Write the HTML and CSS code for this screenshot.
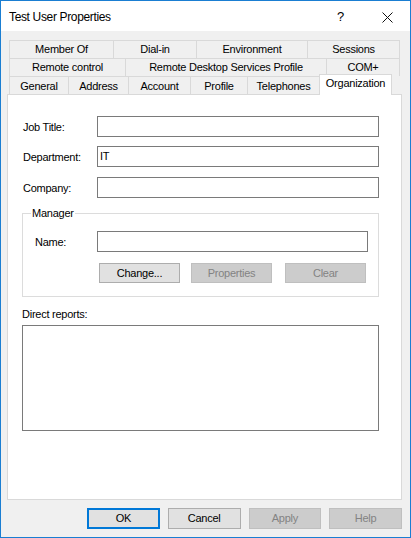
FILE: index.html
```html
<!DOCTYPE html>
<html>
<head>
<meta charset="utf-8">
<title>Test User Properties</title>
<link rel="stylesheet" href="styles.css">
</head>
<body>
<div class="window">
  <div class="titlebar">
    <span class="title">Test User Properties</span>
    <span class="tb-btn help">?</span>
    <span class="tb-btn close"><svg width="11" height="11" viewBox="0 0 11 11"><path d="M0.5 0.5L10.5 10.5M10.5 0.5L0.5 10.5" stroke="#111" stroke-width="1" fill="none"/></svg></span>
  </div>
  <div class="content">
    <div class="tabs">
      <div class="tab-row">
        <div class="tab t-member">Member Of</div>
        <div class="tab t-dialin">Dial-in</div>
        <div class="tab t-env">Environment</div>
        <div class="tab t-sessions last">Sessions</div>
      </div>
      <div class="tab-row">
        <div class="tab t-remote">Remote control</div>
        <div class="tab t-rdsp">Remote Desktop Services Profile</div>
        <div class="tab t-com last">COM+</div>
      </div>
      <div class="tab-row front">
        <div class="tab t-general">General</div>
        <div class="tab t-address">Address</div>
        <div class="tab t-account">Account</div>
        <div class="tab t-profile">Profile</div>
        <div class="tab t-tel">Telephones</div>
        <div class="tab selected t-org">Organization</div>
      </div>
    </div>
    <div class="panel">
      <div class="field">
        <label class="lbl">Job Title:</label>
        <div class="input wide"></div>
      </div>
      <div class="field f-dept">
        <label class="lbl">Department:</label>
        <div class="input wide">IT</div>
      </div>
      <div class="field f-company">
        <label class="lbl">Company:</label>
        <div class="input wide"></div>
      </div>
      <div class="group">
        <span class="legend">Manager</span>
        <div class="field">
          <label class="lbl name-lbl">Name:</label>
          <div class="input name-input"></div>
        </div>
        <div class="group-buttons">
          <button class="btn small">Change...</button>
          <button class="btn small disabled b-props">Properties</button>
          <button class="btn small disabled b-clear">Clear</button>
        </div>
      </div>
      <div class="reports-lbl">Direct reports:</div>
      <div class="listbox"></div>
    </div>
    <div class="footer">
      <button class="btn big default">OK</button>
      <button class="btn big">Cancel</button>
      <button class="btn big disabled">Apply</button>
      <button class="btn big disabled">Help</button>
    </div>
  </div>
</div>
</body>
</html>
```

FILE: styles.css
```css
html, body {
  margin: 0;
  padding: 0;
}
body {
  width: 411px;
  height: 538px;
  overflow: hidden;
  font-family: "Liberation Sans", Arial, sans-serif;
  font-size: 11px;
  letter-spacing: -0.25px;
  color: #000;
}
.window {
  box-sizing: border-box;
  width: 411px;
  height: 538px;
  border: 1px solid #1a7ed2;
  background: #f0f0f0;
  display: flex;
  flex-direction: column;
}
.titlebar {
  height: 30px;
  background: #fff;
  display: flex;
  align-items: center;
  flex: none;
}
.title {
  flex: 1;
  padding-left: 8px;
  font-size: 12px;
  letter-spacing: -0.35px;
  line-height: 30px;
  padding-top: 1px;
  color: #000;
}
.tb-btn {
  width: 46px;
  height: 30px;
  display: flex;
  align-items: center;
  justify-content: center;
  box-sizing: border-box;
}
.help {
  font-size: 13px;
  padding-top: 1px;
  padding-right: 1px;
}
.close {
  padding-top: 3px;
}
.content {
  flex: 1;
  padding: 9px 8px 0 6px;
  display: flex;
  flex-direction: column;
}
.tabs {
  margin: 0 2px;
  display: flex;
  flex-direction: column;
}
.tab-row {
  display: flex;
  height: 18px;
  align-items: flex-end;
}
.tab {
  box-sizing: border-box;
  height: 18px;
  border-top: 1px solid #d9d9d9;
  border-left: 1px solid #d9d9d9;
  text-align: center;
  line-height: 17px;
  white-space: nowrap;
  background: #f0f0f0;
}
.tab.last {
  border-right: 1px solid #d9d9d9;
}
.front .tab {
  padding-top: 1px;
}
.t-member { width: 104px; }
.t-dialin { width: 83px; }
.t-env { width: 111px; }
.t-sessions { width: 93px; }
.t-remote { width: 116px; }
.t-rdsp { width: 201px; }
.t-com { width: 74px; }
.t-general { width: 59px; }
.t-address { width: 60px; }
.t-account { width: 62px; }
.t-profile { width: 57px; }
.t-tel { width: 72px; }
.front .tab.selected {
  width: 73px;
  height: 21px;
  margin-bottom: -1px;
  padding-top: 0;
  border-right: 1px solid #d9d9d9;
  background: #fff;
  position: relative;
  z-index: 2;
}
.panel {
  box-sizing: border-box;
  width: 395px;
  height: 406px;
  border: 1px solid #d9d9d9;
  background: #fff;
  padding: 21px 0 0 14px;
  flex: none;
}
.field {
  display: flex;
  align-items: center;
  height: 21px;
}
.f-dept { margin-top: 9px; }
.f-company { margin-top: 10px; }
.lbl {
  width: 75px;
  flex: none;
  padding-left: 1px;
  box-sizing: border-box;
}
.input {
  box-sizing: border-box;
  height: 21px;
  border: 1px solid #7a7a7a;
  background: #fff;
  padding-left: 2px;
  line-height: 19px;
}
.wide { width: 282px; }
.group {
  position: relative;
  box-sizing: border-box;
  width: 357px;
  margin-top: 15px;
  border: 1px solid #dcdcdc;
  padding: 17px 0 13px 12px;
}
.legend {
  position: absolute;
  top: -7px;
  left: 8px;
  padding: 0 1px;
  background: #fff;
  line-height: 13px;
}
.name-lbl { width: 62px; padding-left: 0; }
.name-input { width: 271px; }
.group-buttons {
  display: flex;
  margin-top: 11px;
  padding-left: 64px;
}
.btn {
  box-sizing: border-box;
  font-family: "Liberation Sans", Arial, sans-serif;
  font-size: 11px;
  letter-spacing: -0.25px;
  color: #000;
  background: #e1e1e1;
  border: 1px solid #adadad;
  border-radius: 0;
  padding: 0;
  margin: 0;
  text-align: center;
}
.btn.small {
  width: 81px;
  height: 20px;
  line-height: 18px;
}
.btn.disabled {
  background: #cccccc;
  border-color: #bfbfbf;
  color: #838383;
}
.b-props { margin-left: 11px; }
.b-clear { margin-left: 13px; }
.reports-lbl {
  margin-top: 11px;
  line-height: 13px;
}
.listbox {
  box-sizing: border-box;
  width: 357px;
  height: 106px;
  margin-top: 4px;
  border: 1px solid #7a7a7a;
  background: #fff;
}
.footer {
  display: flex;
  margin-top: 8px;
  padding-left: 80px;
  gap: 8px;
}
.btn.big {
  width: 73px;
  height: 21px;
  line-height: 19px;
}
.btn.default {
  border: 2px solid #0078d7;
  line-height: 17px;
}
```
